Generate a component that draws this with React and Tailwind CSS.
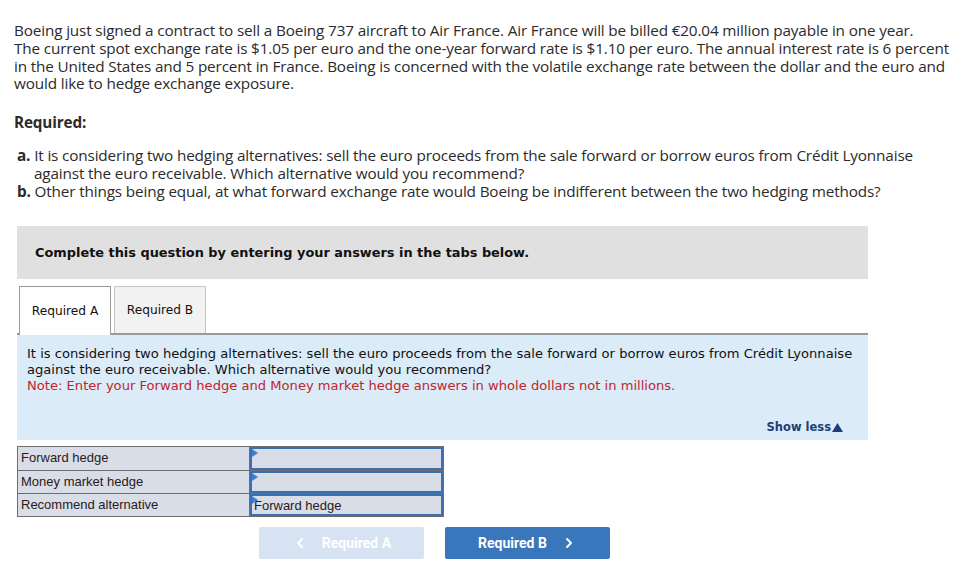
import { ChevronLeft, ChevronRight } from 'lucide-react'

const rows = [
  { label: 'Forward hedge', value: '' },
  { label: 'Money market hedge', value: '' },
  { label: 'Recommend alternative', value: 'Forward hedge' },
]

const InputCell = ({ value }) => (
  <div className="relative h-full border-2 border-[#3d6fae] bg-[#d9dde8] pl-[2px] leading-[19px]">
    <span className="absolute left-0 top-0 h-0 w-0 border-y-[4px] border-l-[6px] border-y-transparent border-l-[#3d7fd0]" />
    {value}
  </div>
)

export default function App() {
  return (
    <div className="min-h-screen bg-white px-[14px] pt-[22px] text-[#2b2b2b]">
      <div className="font-['Open_Sans',sans-serif] text-[15.3px] leading-[17.8px] tracking-[-0.15px]">
        <p className="whitespace-nowrap">
          Boeing just signed a contract to sell a Boeing 737 aircraft to Air France. Air France will be billed €20.04 million payable in one year.
          <br />
          The current spot exchange rate is $1.05 per euro and the one-year forward rate is $1.10 per euro. The annual interest rate is 6 percent
          <br />
          in the United States and 5 percent in France. Boeing is concerned with the volatile exchange rate between the dollar and the euro and
          <br />
          would like to hedge exchange exposure.
        </p>
        <p className="mt-[21px] font-bold">Required:</p>
        <div className="mt-[15px] whitespace-nowrap pl-[3px]">
          <p className="pl-[17px] -indent-[17px]">
            <b>a.</b> It is considering two hedging alternatives: sell the euro proceeds from the sale forward or borrow euros from Crédit Lyonnaise
            <br />
            against the euro receivable. Which alternative would you recommend?
          </p>
          <p>
            <b>b.</b> Other things being equal, at what forward exchange rate would Boeing be indifferent between the two hedging methods?
          </p>
        </div>
      </div>

      <div className="ml-[3px] mt-[26px] w-[851px] font-['DejaVu_Sans',Verdana,sans-serif]">
        <div className="flex h-[53px] items-center bg-[#e0e0e0] px-[18px] text-[12.9px] font-bold text-[#111]">
          Complete this question by entering your answers in the tabs below.
        </div>

        <div className="mt-[7px] flex gap-[3px] pl-[2px] text-[12.2px]">
          <div className="-mb-[2px] flex h-[49px] w-[92px] items-center justify-center border border-b-0 border-[#9a9a9a] bg-white text-[#111]">
            Required A
          </div>
          <div className="flex h-[47px] w-[92px] items-center justify-center border border-b-0 border-[#c6c6c6] bg-[#f2f2f2] text-[#111]">
            Required B
          </div>
        </div>

        <div className="h-[107px] border-t-2 border-[#9a9a9a] bg-[#dbebf8] px-[10px] pt-[11px] text-[13.1px] leading-[16px] text-[#111]">
          <p className="whitespace-nowrap">
            It is considering two hedging alternatives: sell the euro proceeds from the sale forward or borrow euros from Crédit Lyonnaise
            <br />
            against the euro receivable. Which alternative would you recommend?
          </p>
          <p className="whitespace-nowrap text-[#c0262d]">Note: Enter your Forward hedge and Money market hedge answers in whole dollars not in millions.</p>
          <div className="mt-[25px] flex justify-end pr-[15px]">
            <span className="flex items-center gap-[1px] text-[11.5px] font-bold text-[#1f3e78]">
              Show less
              <svg width="11" height="9" viewBox="0 0 11 9"><path d="M5.5 0L11 9H0z" fill="#1f3e78" /></svg>
            </span>
          </div>
        </div>

        <div className="mt-[6px] w-[427px] border border-[#6e6e6e] font-['Liberation_Sans',Arial,sans-serif] text-[13px] text-[#2a1a1a]">
          {rows.map((r, i) => (
            <div key={r.label} className={`flex h-[23px] ${i > 0 ? 'border-t border-[#6e6e6e]' : ''}`}>
              <div className="w-[232px] border-r border-[#6e6e6e] bg-[#d9dde8] pl-[3px] leading-[22px]">{r.label}</div>
              <div className="flex-1 bg-[#d9dde8]">
                <InputCell value={r.value} />
              </div>
            </div>
          ))}
        </div>

        <div className="mt-[10px] flex gap-[21px] pl-[242px] font-['Roboto',sans-serif] text-[14px] font-bold text-white">
          <button className="flex h-[32px] w-[165px] items-center justify-center gap-[14px] rounded-[2px] bg-[#d7e3f2]">
            <ChevronLeft size={16} strokeWidth={3} />
            Required A
          </button>
          <button className="flex h-[32px] w-[165px] items-center justify-center gap-[14px] rounded-[2px] bg-[#3a76bb]">
            Required B
            <ChevronRight size={16} strokeWidth={3} />
          </button>
        </div>
      </div>
    </div>
  )
}
